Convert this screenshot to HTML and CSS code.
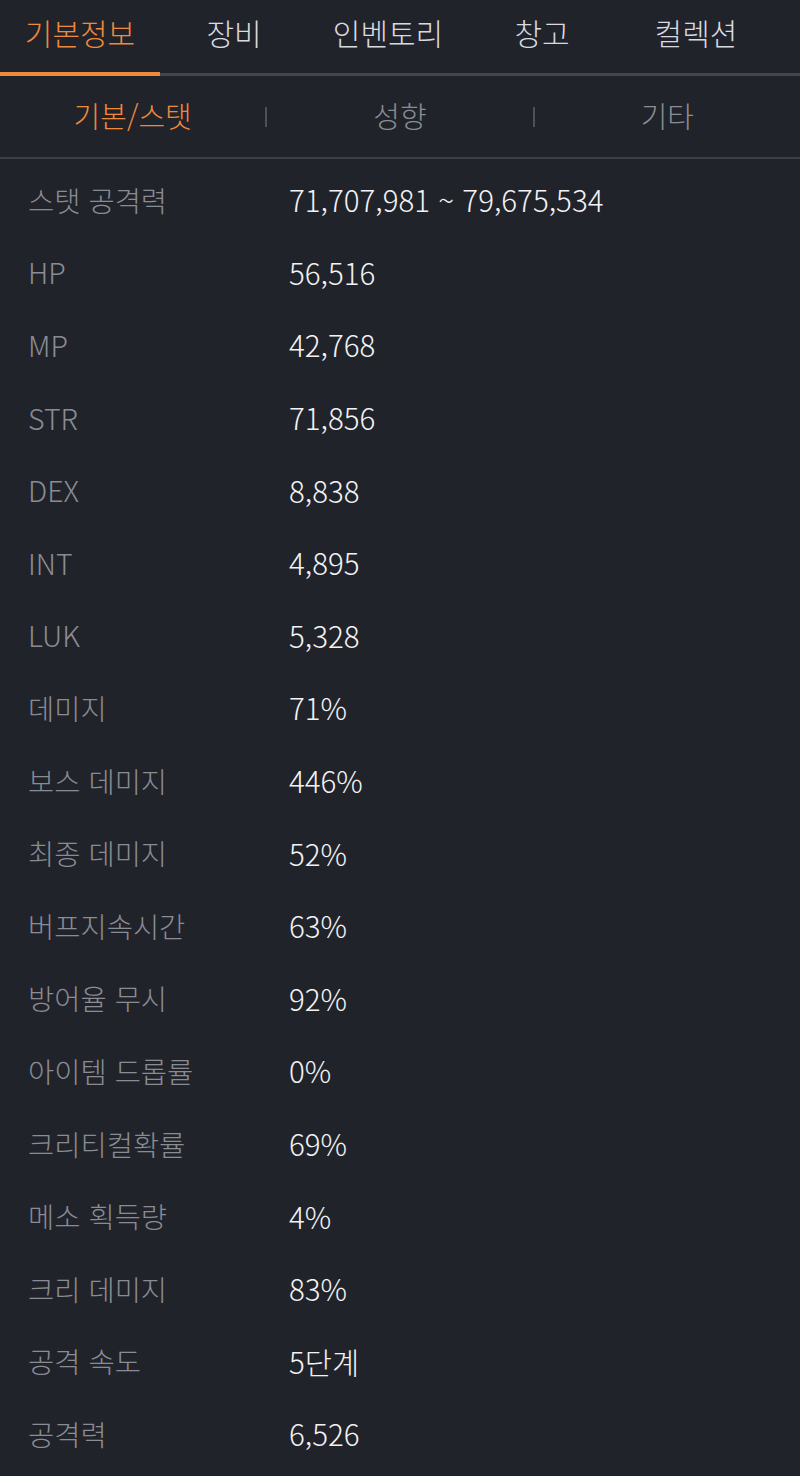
FILE: index.html
```html
<!DOCTYPE html>
<html lang="ko">
<head>
<meta charset="utf-8">
<link rel="stylesheet" href="styles.css">
</head>
<body>
<nav class="tabs">
  <div class="tab active">기본정보</div>
  <div class="tab">장비</div>
  <div class="tab">인벤토리</div>
  <div class="tab">창고</div>
  <div class="tab">컬렉션</div>
</nav>
<nav class="subtabs">
  <div class="sub active">기본/스탯</div>
  <div class="sep"></div>
  <div class="sub">성향</div>
  <div class="sep"></div>
  <div class="sub">기타</div>
</nav>
<section class="stats">
  <div class="row"><span class="label">스탯 공격력</span><span class="value">71,707,981 ~ 79,675,534</span></div>
  <div class="row"><span class="label">HP</span><span class="value">56,516</span></div>
  <div class="row"><span class="label">MP</span><span class="value">42,768</span></div>
  <div class="row"><span class="label">STR</span><span class="value">71,856</span></div>
  <div class="row"><span class="label">DEX</span><span class="value">8,838</span></div>
  <div class="row"><span class="label">INT</span><span class="value">4,895</span></div>
  <div class="row"><span class="label">LUK</span><span class="value">5,328</span></div>
  <div class="row"><span class="label">데미지</span><span class="value">71%</span></div>
  <div class="row"><span class="label">보스 데미지</span><span class="value">446%</span></div>
  <div class="row"><span class="label">최종 데미지</span><span class="value">52%</span></div>
  <div class="row"><span class="label">버프지속시간</span><span class="value">63%</span></div>
  <div class="row"><span class="label">방어율 무시</span><span class="value">92%</span></div>
  <div class="row"><span class="label">아이템 드롭률</span><span class="value">0%</span></div>
  <div class="row"><span class="label">크리티컬확률</span><span class="value">69%</span></div>
  <div class="row"><span class="label">메소 획득량</span><span class="value">4%</span></div>
  <div class="row"><span class="label">크리 데미지</span><span class="value">83%</span></div>
  <div class="row"><span class="label">공격 속도</span><span class="value">5단계</span></div>
  <div class="row"><span class="label">공격력</span><span class="value">6,526</span></div>
</section>
</body>
</html>
```
FILE: styles.css
```css
html, body {
  margin: 0;
  padding: 0;
  background: #21232b;
}
body {
  font-family: "Noto Sans CJK KR", "Noto Sans", sans-serif;
  font-weight: 300;
  width: 800px;
  height: 1476px;
  overflow: hidden;
}
.tabs {
  display: grid;
  grid-template-columns: repeat(5, 154px);
  padding-left: 3px;
  height: 73px;
  border-bottom: 3px solid #43464e;
}
.tab {
  display: flex;
  align-items: center;
  justify-content: center;
  padding-bottom: 9px;
  font-size: 30px;
  color: #d9dae0;
  position: relative;
  white-space: nowrap;
}
.tab.active {
  color: #f0893b;
}
.tab.active::after {
  content: "";
  position: absolute;
  left: -3px;
  width: 160px;
  bottom: -3px;
  height: 4px;
  background: #f0893b;
}
.subtabs {
  display: flex;
  align-items: center;
  height: 81px;
  border-bottom: 2px solid #3d4048;
}
.sub {
  flex: 1;
  text-align: center;
  font-size: 29px;
  color: #8b8d93;
  padding-bottom: 3px;
}
.sub.active {
  color: #f0893b;
}
.sep {
  width: 2px;
  height: 20px;
  background: #4e5159;
}
.stats {
  padding-top: 4px;
}
.row {
  display: flex;
  align-items: center;
  height: 72.6px;
  padding-left: 28px;
}
.label {
  width: 261px;
  font-size: 28.5px;
  color: #8a8c93;
}
.value {
  font-size: 29.5px;
  color: #f3f3f5;
}
```
